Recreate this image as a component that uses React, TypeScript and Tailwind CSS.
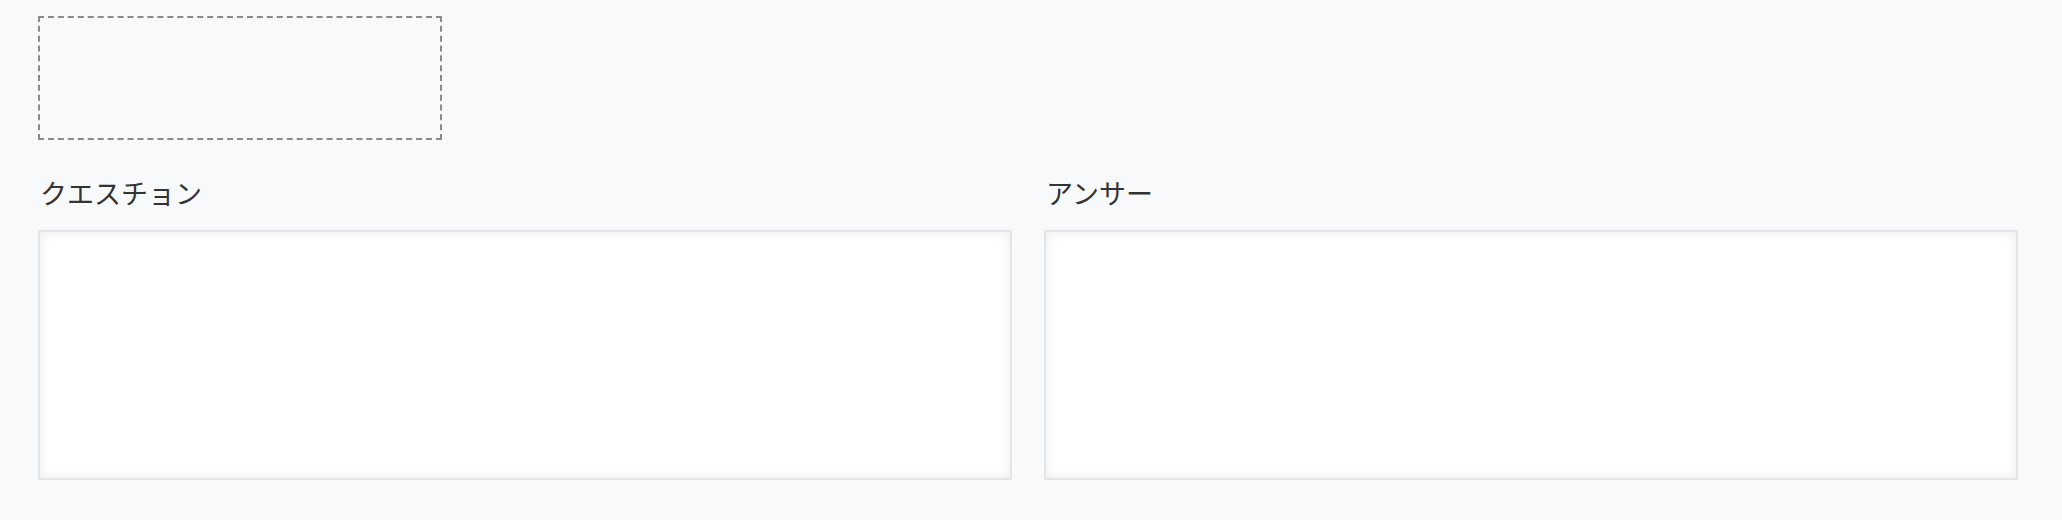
export default function App() {
  return (
    <div className="min-h-[520px] w-full bg-[#f8f9fa] pt-4 pl-[38px] pr-[44px] font-['Noto_Sans_CJK_JP','Noto_Sans',sans-serif] text-[#333]">
      <div className="h-[124px] w-[404px] border-2 border-dashed border-[#8a8a8a]" />
      <div className="mt-[33px] grid grid-cols-2 gap-8">
        <div className="flex flex-col">
          <div className="pl-[2px] text-[27px] leading-[40px]">クエスチョン</div>
          <div className="mt-[17px] h-[250px] border-2 border-[#e3e5e7] bg-white shadow-[inset_0_0_12px_rgba(0,0,0,0.08)]" />
        </div>
        <div className="flex flex-col">
          <div className="pl-[2px] text-[27px] leading-[40px]">アンサー</div>
          <div className="mt-[17px] h-[250px] border-2 border-[#e3e5e7] bg-white shadow-[inset_0_0_12px_rgba(0,0,0,0.08)]" />
        </div>
      </div>
    </div>
  );
}
